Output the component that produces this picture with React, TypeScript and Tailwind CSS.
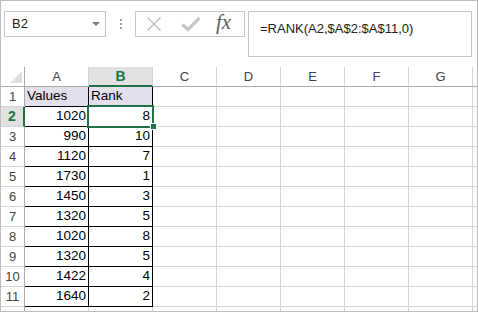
import React from 'react';

const cols = ['A', 'B', 'C', 'D', 'E', 'F', 'G'];

const data: [string, string][] = [
    ['1020', '8'],
    ['990', '10'],
    ['1120', '7'],
    ['1730', '1'],
    ['1450', '3'],
    ['1320', '5'],
    ['1020', '8'],
    ['1320', '5'],
    ['1422', '4'],
    ['1640', '2'],
];

const font = { fontFamily: '"Liberation Sans", Arial, sans-serif' };

const FormulaBar: React.FC = () => (
    <div className="h-[66px] shrink-0 flex items-start pt-[10px] pl-[3px]">
        {/* Name box */}
        <div className="w-[102px] h-[26px] border border-[#c6c6c6] bg-white flex items-center justify-between pl-[7px] pr-[5px]">
            <span className="text-[13px] text-[#222]">B2</span>
            <svg width="8" height="5" viewBox="0 0 8 5">
                <path d="M0 0 L8 0 L4 4 Z" fill="#7a7a7a" />
            </svg>
        </div>

        {/* grip dots */}
        <div className="ml-[14px] mt-[8px] flex flex-col gap-[2px]">
            <div className="w-[2px] h-[2px] bg-[#a6a6a6]" />
            <div className="w-[2px] h-[2px] bg-[#a6a6a6]" />
            <div className="w-[2px] h-[2px] bg-[#a6a6a6]" />
        </div>

        {/* cancel / enter / fx */}
        <div className="ml-[13px] w-[110px] h-[26px] border border-[#c6c6c6] bg-white flex items-center pl-[10px]">
            <svg width="16" height="16" viewBox="0 0 16 16">
                <path d="M1.5 1.5 L14.5 14.5 M14.5 1.5 L1.5 14.5" stroke="#c4c4c4" strokeWidth="1.6" fill="none" />
            </svg>
            <svg width="20" height="16" viewBox="0 0 20 16" className="ml-[19px]">
                <path d="M1.5 8.5 L7 13.5 L18.5 2" stroke="#c4c4c4" strokeWidth="3.2" fill="none" />
            </svg>
            <span
                className="ml-[15px] text-[21px] italic text-[#5e5e5e] leading-none -mt-[3px]"
                style={{ fontFamily: '"Liberation Serif", "Times New Roman", serif' }}
            >
                fx
            </span>
        </div>

        {/* formula box */}
        <div className="ml-[3px] w-[224px] h-[46px] border border-[#c6c6c6] bg-white pl-[11px] pt-[4px]">
            <span className="text-[13px] text-[#222]">=RANK(A2,$A$2:$A$11,0)</span>
        </div>
    </div>
);

const App: React.FC = () => {
    return (
        <div className="w-[478px] h-[312px] bg-white border border-[#bdbdbd] flex flex-col overflow-hidden" style={font}>
            <FormulaBar />

            <div className="relative flex-1 overflow-hidden">
                <div className="grid grid-cols-[24px_repeat(7,64px)_1fr] auto-rows-[20px]">
                    {/* column headers */}
                    <div className="relative border-r border-b border-[#ababab]">
                        <svg width="12" height="12" viewBox="0 0 12 12" className="absolute right-[2px] bottom-[3px]">
                            <path d="M12 0 L12 12 L0 12 Z" fill="#dfdfdf" />
                        </svg>
                    </div>
                    {cols.map(c => (
                        <div
                            key={c}
                            className={
                                c === 'B'
                                    ? 'bg-[#e1e1e1] border-r border-r-[#d4d4d4] border-b-2 border-b-[#217346] flex items-center justify-center text-[14px] font-bold text-[#217346]'
                                    : 'border-r border-r-[#d4d4d4] border-b border-b-[#ababab] flex items-center justify-center text-[13px] text-[#444]'
                            }
                        >
                            {c}
                        </div>
                    ))}
                    <div className="border-b border-[#ababab]" />

                    {/* row 1: headings */}
                    <div className="border-r border-r-[#ababab] border-b border-b-[#d4d4d4] flex items-center justify-center text-[13px] text-[#444]">1</div>
                    <div className="bg-[#e4dfec] border-r border-b border-black flex items-center pl-[2px] text-[13.5px] text-black">Values</div>
                    <div className="bg-[#e4dfec] border-r border-b border-black flex items-center pl-[2px] text-[13.5px] text-black">Rank</div>
                    {cols.slice(2).map(c => (
                        <div key={c} className="border-r border-b border-[#d4d4d4]" />
                    ))}
                    <div className="border-b border-[#d4d4d4]" />

                    {data.map(([v, r], i) => {
                        const row = i + 2;
                        const active = row === 2;
                        return (
                            <React.Fragment key={row}>
                                <div
                                    className={
                                        active
                                            ? 'bg-[#e1e1e1] border-r-2 border-r-[#217346] border-b border-b-[#d4d4d4] flex items-center justify-center text-[14px] font-bold text-[#217346]'
                                            : 'border-r border-r-[#ababab] border-b border-b-[#d4d4d4] flex items-center justify-center text-[13px] text-[#444]'
                                    }
                                >
                                    {row}
                                </div>
                                <div className="border-r border-b border-black flex items-center justify-end pr-[2px] text-[13.5px] text-black">{v}</div>
                                <div className="border-r border-b border-black flex items-center justify-end pr-[2px] text-[13.5px] text-black">{r}</div>
                                {cols.slice(2).map(c => (
                                    <div key={c} className="border-r border-b border-[#d4d4d4]" />
                                ))}
                                <div className="border-b border-[#d4d4d4]" />
                            </React.Fragment>
                        );
                    })}

                    {/* partial row 12 */}
                    <div className="border-r border-[#ababab]" />
                    {cols.map(c => (
                        <div key={c} className="border-r border-[#d4d4d4]" />
                    ))}
                    <div />
                </div>

                {/* active cell B2 */}
                <div className="absolute left-[86px] top-[38px] w-[67px] h-[23px] border-2 border-[#217346] pointer-events-none" />
                <div className="absolute left-[149px] top-[56px] w-[7px] h-[7px] bg-[#217346] border border-white" />
            </div>
        </div>
    );
};

export default App;
